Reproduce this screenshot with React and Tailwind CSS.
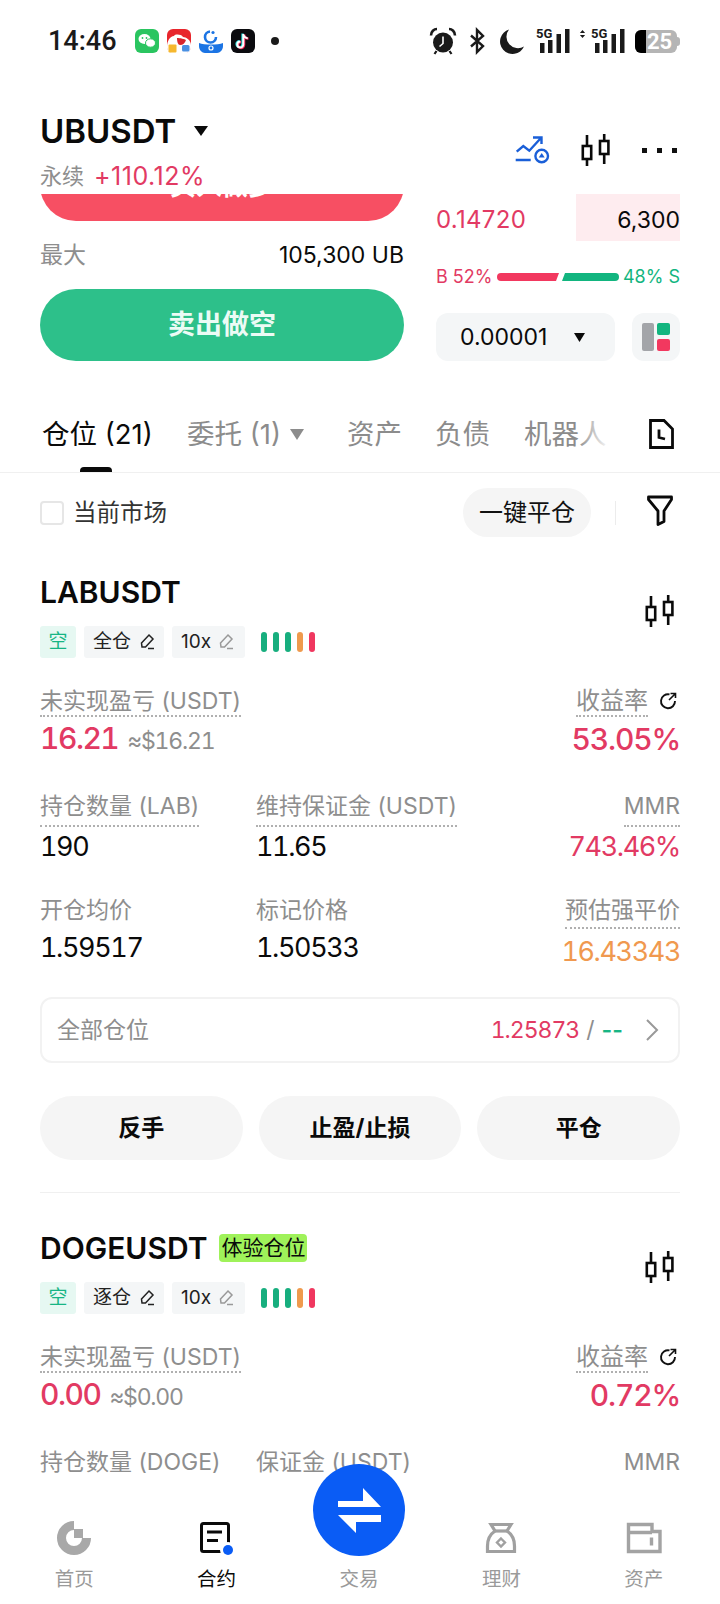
import React from 'react';

function AppIcons() {
  return (
    <div className="flex items-center gap-2 ml-[18px]">
      {/* wechat */}
      <svg width="24" height="24" viewBox="0 0 24 24">
        <rect width="24" height="24" rx="6" fill="#2ac560" />
        <ellipse cx="9.5" cy="10" rx="6" ry="5" fill="#fff" />
        <ellipse cx="15.5" cy="14" rx="5" ry="4.2" fill="#fff" stroke="#2ac560" strokeWidth="1" />
        <circle cx="7.5" cy="9" r="0.9" fill="#2ac560" />
        <circle cx="11.5" cy="9" r="0.9" fill="#2ac560" />
      </svg>
      {/* mascot app */}
      <svg width="24" height="24" viewBox="0 0 24 24">
        <rect width="24" height="24" rx="6" fill="#e8262c" />
        <path d="M0 18C0 12 3 7 7 7c1-2 7-2 9 1 3 0 8 3 8 8v2c0 4-2 6-6 6H6c-4 0-6-2-6-6Z" fill="#fff" />
        <path d="M10 9c3 0 8 1 9 2-1 3-3 5-6 5-2 0-3-3-3-7Z" fill="#d9262c" />
        <rect x="1.5" y="15.5" width="8" height="8" rx="1" fill="#f6b82e" />
        <rect x="15" y="16" width="7.5" height="6.5" rx="1.5" fill="#4a90e2" />
      </svg>
      {/* blue bowl */}
      <svg width="24" height="24" viewBox="0 0 24 24">
        <path d="M11 2.5a5.5 5.5 0 1 0 6 5.5" fill="none" stroke="#1b74e4" strokeWidth="2.6" />
        <circle cx="14" cy="3.5" r="1.6" fill="#1b74e4" />
        <path d="M0 14c5 2 19 2 24 0v3c0 4-3 7-6 7H6c-3 0-6-3-6-7Z" fill="#1b74e4" />
        <circle cx="12" cy="19" r="2" fill="none" stroke="#fff" strokeWidth="1.2" />
      </svg>
      {/* tiktok */}
      <svg width="24" height="24" viewBox="0 0 24 24">
        <rect width="24" height="24" rx="6" fill="#0b0b0f" />
        <path d="M12.3 5v10.5a3 3 0 1 1-3-3M12.3 5c.3 2.4 2 4 4.4 4.2" transform="translate(-0.8 -0.4)" fill="none" stroke="#25e6e6" strokeWidth="2.3" />
        <path d="M12.3 5v10.5a3 3 0 1 1-3-3M12.3 5c.3 2.4 2 4 4.4 4.2" transform="translate(0.8 0.5)" fill="none" stroke="#f5285a" strokeWidth="2.3" />
        <path d="M12.3 5v10.5a3 3 0 1 1-3-3M12.3 5c.3 2.4 2 4 4.4 4.2" fill="none" stroke="#fff" strokeWidth="2" />
      </svg>
      <div className="w-2 h-2 rounded-full bg-[#1a1a1a] ml-2" />
    </div>
  );
}

function Signal({ arrows }) {
  const ox = arrows ? 12 : 0;
  return (
    <svg width={arrows ? 47 : 36} height="30" viewBox={`0 0 ${arrows ? 47 : 36} 30`}>
      {arrows && <path d="M4.5 4l2.6 3H1.9ZM4.5 12l2.6-3H1.9Z" fill="#1a1a1a" />}
      <text x={ox + 1} y="12" fontSize="13" fontWeight="700" fill="#1a1a1a" fontFamily="Roboto, sans-serif">5G</text>
      <rect x={ox + 5} y="17" width="4.5" height="10" fill="#1a1a1a" />
      <rect x={ox + 13} y="14" width="4.5" height="13" fill="#1a1a1a" />
      <rect x={ox + 21.5} y="8" width="4.5" height="19" fill="#1a1a1a" />
      <rect x={ox + 30} y="3" width="4.5" height="24" fill="#1a1a1a" />
    </svg>
  );
}

function StatusBar() {
  return (
    <div className="h-[82px] flex items-center pl-[48px] pr-[40px]">
      <span className="font-['Roboto',sans-serif] font-medium text-[27px] leading-none text-[#1a1a1a]">14:46</span>
      <AppIcons />
      <div className="ml-auto flex items-center">
        <svg width="30" height="30" viewBox="0 0 30 30">
          <circle cx="15" cy="16.5" r="10" fill="#1a1a1a" />
          <path d="M15 10.5v7l-3.5 3" fill="none" stroke="#fff" strokeWidth="1.6" />
          <path d="M3 9.5c0-4 3-6.5 6-6.5M27 9.5c0-4-3-6.5-6-6.5" fill="none" stroke="#1a1a1a" strokeWidth="2.6" />
          <path d="M8.5 25l-2 3M21.5 25l2 3" stroke="#1a1a1a" strokeWidth="2.2" />
        </svg>
        <svg className="ml-[10px]" width="18" height="30" viewBox="0 0 18 30">
          <path d="M3 9.5l12 10.5-6 6V4l6 6L3 20.5" fill="none" stroke="#1a1a1a" strokeWidth="2.4" />
        </svg>
        <svg className="ml-[12px]" width="27" height="27" viewBox="0 0 27 27">
          <path d="M11 1.5A12.5 12.5 0 1 0 26 18.5 11.5 11.5 0 0 1 11 1.5Z" fill="#1a1a1a" />
        </svg>
        <div className="ml-[10px]"><Signal /></div>
        <div className="ml-[7px]"><Signal arrows /></div>
        <div className="ml-[10px] flex items-center">
          <div className="w-[42px] h-[23px] rounded-[6px] overflow-hidden flex bg-[#b5b5b5]">
            <div className="w-[11px] bg-black" />
            <span className="font-['Roboto',sans-serif] font-bold text-[22px] leading-[23px] text-white ml-[1px]">25</span>
          </div>
          <div className="w-[3px] h-[9px] bg-[#b5b5b5] rounded-r-sm" />
        </div>
      </div>
    </div>
  );
}

function CandleIcon({ className }) {
  return (
    <svg className={className} width="32" height="34" viewBox="0 0 32 34" fill="none" stroke="#0a0a0a" strokeWidth="2.6">
      <rect x="2.8" y="13" width="8.4" height="13" />
      <path d="M7 2v11M7 26v7" />
      <rect x="20" y="8" width="8.4" height="13" />
      <path d="M24.2 1v7M24.2 21v10" />
    </svg>
  );
}

function Header() {
  return (
    <div className="h-[112px] flex justify-between px-10">
      <div className="pt-[29px]">
        <div className="flex items-center">
          <span className="font-semibold text-[33px] leading-[40px] text-[#0a0a0a]">UBUSDT</span>
          <svg className="ml-[18px]" width="14" height="10" viewBox="0 0 14 10"><path d="M0 0h14L7 10Z" fill="#0a0a0a" /></svg>
        </div>
        <div className="mt-[10px] flex items-center leading-[30px]">
          <span className="text-[22px] text-[#8e8e8e]">永续</span>
          <span className="ml-[10px] text-[25px] tracking-[0.5px] text-[#e23a63]">+110.12%</span>
        </div>
      </div>
      <div className="pt-[48px] pr-[3px] flex items-center self-start h-[88px]">
        <svg width="36" height="36" viewBox="14 12 36 36" fill="none" stroke="#1a5fd8" strokeWidth="2.4">
          <path d="M16.7 31.7l6.6-5.7 6 4.7 11.4-12.4M33 17.5h8.5V24M15.7 40h15" />
          <circle cx="41.7" cy="36" r="6.3" />
          <path d="M41.7 33l3 4.6h-6Z" fill="#1a5fd8" stroke="none" />
        </svg>
        <CandleIcon className="ml-[30px]" />
        <div className="ml-[30px] flex gap-[10px]">
          <div className="w-[5px] h-[5px] bg-[#111]" />
          <div className="w-[5px] h-[5px] bg-[#111]" />
          <div className="w-[5px] h-[5px] bg-[#111]" />
        </div>
      </div>
    </div>
  );
}

function TradePanel() {
  return (
    <div className="h-[167px] overflow-hidden flex pl-10 pr-10">
      <div className="w-[364px] shrink-0">
        <div className="mt-[-45px] h-[72px] rounded-[36px] bg-[#f74f63] flex items-center justify-center text-white font-bold text-[26px]">买入做多</div>
        <div className="mt-[19px] flex justify-between items-center text-[23px] leading-[30px]">
          <span className="text-[#8e8e8e]">最大</span>
          <span className="text-[#0a0a0a]">105,300 UB</span>
        </div>
        <div className="mt-[19px] h-[72px] rounded-[36px] bg-[#2dc08a] flex items-center justify-center text-[#ecfbf5] font-bold text-[27px]">卖出做空</div>
      </div>
      <div className="ml-[32px] flex-1">
        <div className="h-[47px] flex justify-between text-[23px]">
          <span className="self-center pt-[5px] text-[24px] tracking-[0.3px] text-[#e23a63]">0.14720</span>
          <div className="w-[104px] pt-[5px] bg-[#feecef] flex items-center justify-end text-[#0a0a0a]">6,300</div>
        </div>
        <div className="mt-[26px] h-5 flex items-center text-[18px] leading-5">
          <span className="text-[#e23a63] whitespace-nowrap">B 52%</span>
          <svg className="ml-[5px]" width="62" height="8" viewBox="0 0 62 8"><path d="M4 0H62L59 8H4a4 4 0 0 1 0-8Z" fill="#f2385f" /></svg>
          <svg className="ml-[3px]" width="57" height="8" viewBox="0 0 57 8"><path d="M3 0H53a4 4 0 0 1 0 8H0Z" fill="#12b57f" /></svg>
          <span className="ml-auto text-[#12b57f] whitespace-nowrap">48% S</span>
        </div>
        <div className="mt-[26px] flex justify-between">
          <div className="w-[179px] h-[48px] rounded-xl bg-[#f4f6f7] flex items-center pl-6 text-[23px] text-[#0a0a0a]">
            0.00001
            <svg className="ml-[27px]" width="11" height="9" viewBox="0 0 11 9"><path d="M0 0h11L5.5 9Z" fill="#0a0a0a" /></svg>
          </div>
          <div className="w-[48px] h-[48px] rounded-xl bg-[#f4f6f7] flex items-center justify-center gap-[3px]">
            <div className="w-[12px] h-[28px] rounded-[2px] bg-[#a3a5a9]" />
            <div className="flex flex-col gap-[4px]">
              <div className="w-[13px] h-[12px] rounded-[2px] bg-[#12b57f]" />
              <div className="w-[13px] h-[12px] rounded-[2px] bg-[#f2385f]" />
            </div>
          </div>
        </div>
      </div>
    </div>
  );
}

function Tabs() {
  return (
    <div className="h-[112px] pt-[55px] border-b border-[#f0f0f0] relative flex items-start pl-[42px] text-[27.5px] leading-[36px] text-[#8c8c8c]">
      <div className="relative w-[111px] whitespace-nowrap text-[#0a0a0a]">
        仓位 (21)
        <div className="absolute left-[38px] top-[51px] w-[32px] h-[5px] rounded-t-[4px] bg-[#0a0a0a]" />
      </div>
      <span className="ml-[34px] w-[97px] whitespace-nowrap">委托 (1)</span>
      <svg className="ml-[6px] mt-[13px]" width="14" height="11" viewBox="0 0 14 11"><path d="M0 0h14L7 11Z" fill="#8c8c8c" /></svg>
      <span className="ml-[43px]">资产</span>
      <span className="ml-[33px]">负债</span>
      <div className="ml-[34px] relative">
        机器人
        <div className="absolute right-0 top-0 w-[30px] h-full bg-gradient-to-r from-white/0 to-white/90" />
      </div>
      <svg className="ml-[40px] mt-[1px]" width="29" height="34" viewBox="0 0 29 34" fill="none" stroke="#0a0a0a" strokeWidth="2.8">
        <path d="M3.5 3.5H17L25.5 12V30.5H3.5Z" />
        <path d="M12 12.5v8l6 1.5" />
      </svg>
    </div>
  );
}

function FilterRow() {
  return (
    <div className="pt-[15px] pl-10 pr-[45px] flex items-center">
      <div className="w-[24px] h-[24px] rounded-[4px] border-2 border-[#e6e6e6]" />
      <span className="ml-[9px] pt-[1px] text-[23.5px] text-[#333]">当前市场</span>
      <div className="ml-auto w-[128px] h-[49px] rounded-full bg-[#f5f5f5] flex items-center justify-center text-[24px] text-[#111]">一键平仓</div>
      <div className="ml-[24px] w-px h-[24px] bg-[#ececec]" />
      <svg className="ml-[29px] mt-[-5px]" width="30" height="34" viewBox="0 0 30 34" fill="none" stroke="#0a0a0a" strokeWidth="2.8" strokeLinejoin="round">
        <path d="M3.5 4h23v2.5L19 18v10.5L13 31.5V18L3.5 6.5Z" />
      </svg>
    </div>
  );
}

function PencilIcon({ color }) {
  return (
    <svg width="16" height="18" viewBox="0 0 16 18" fill="none" stroke={color} strokeWidth="1.5">
      <path d="M10 2l4 4-7.5 8H3l-.5-4Z" />
      <path d="M9 15.5h6" />
    </svg>
  );
}

function Tags({ margin }) {
  return (
    <div className="mt-[16px] flex items-center h-[32px]">
      <div className="w-[36px] h-full rounded-[3px] bg-[#e6f8f2] text-[#17b584] text-[19px] flex items-center justify-center">空</div>
      <div className="ml-2 w-[80px] h-full rounded-[3px] bg-[#f4f6f7] text-[19px] text-[#222] flex items-center pl-[9px]">
        {margin}
        <span className="ml-[8px]"><PencilIcon color="#222" /></span>
      </div>
      <div className="ml-2 w-[73px] h-full rounded-[3px] bg-[#f4f6f7] text-[19px] text-[#222] flex items-center pl-[9px]">
        10x
        <span className="ml-[7px]"><PencilIcon color="#999" /></span>
      </div>
      <div className="ml-4 flex gap-[6px]">
        <div className="w-[6px] h-[20px] rounded-full bg-[#17ae7e]" />
        <div className="w-[6px] h-[20px] rounded-full bg-[#17ae7e]" />
        <div className="w-[6px] h-[20px] rounded-full bg-[#17ae7e]" />
        <div className="w-[6px] h-[20px] rounded-full bg-[#ef9a4d]" />
        <div className="w-[6px] h-[20px] rounded-full bg-[#f0375f]" />
      </div>
    </div>
  );
}

function Label({ children, dotted, pad = '' }) {
  return (
    <span className={`text-[23px] leading-[28px] text-[#8e8e8e] whitespace-nowrap ${dotted ? `border-b-2 border-dotted border-[#b0b0b0] ${pad}` : ''}`}>
      {children}
    </span>
  );
}

// figures use tabular digits pulled in tight, the wide "1" is what the reference shows
function Figure({ children, color = 'text-[#0a0a0a]', className = '' }) {
  return <span className={`tabular-nums text-[27px] leading-[32px] tracking-[-1.4px] ${color} ${className}`}>{children}</span>;
}

function PositionHead({ symbol, badge, margin }) {
  return (
    <div className="flex justify-between">
      <div>
        <div className="flex items-center h-[36px]">
          <span className="font-semibold text-[30px] leading-[36px] text-[#0a0a0a]">{symbol}</span>
          {badge && <span className="ml-[12px] h-[28px] w-[88px] rounded-[4px] bg-[#9ff25a] text-[21px] leading-[28px] text-[#0a0a0a] text-center">{badge}</span>}
        </div>
        <Tags margin={margin} />
      </div>
      <CandleIcon className="mt-[20px] mr-[4px]" />
    </div>
  );
}

function PnlRow({ pnl, usd, rate }) {
  return (
    <div className="mt-[29px]">
      <div className="flex justify-between items-start">
        <Label dotted>未实现盈亏 (USDT)</Label>
        <div className="flex items-start pr-[2px]">
          <span className="text-[24px] leading-[28px] text-[#8e8e8e] whitespace-nowrap border-b-2 border-dotted border-[#b0b0b0]">收益率</span>
          <svg className="ml-[10px] mt-[4px]" width="20" height="20" viewBox="0 0 20 20" fill="none" stroke="#111" strokeWidth="1.9">
            <path d="M11.5 3.4A7 7 0 1 0 17 10" />
            <path d="M11 9l6-6M12.5 2.5H17.5V7" strokeWidth="1.6" />
          </svg>
        </div>
      </div>
      <div className="mt-[4px] flex justify-between items-center h-[36px]">
        <div className="flex items-baseline">
          <span className="tabular-nums font-medium text-[30px] leading-[36px] tracking-[-1.5px] text-[#e23a63]">{pnl}</span>
          <span className="tabular-nums ml-[9px] text-[23px] tracking-[-1.2px] text-[#8e8e8e]">{usd}</span>
        </div>
        <span className="tabular-nums font-medium text-[30px] leading-[36px] tracking-[-1.2px] text-[#e23a63]">{rate}</span>
      </div>
    </div>
  );
}

function NavIcon({ name }) {
  if (name === 'home') {
    return (
      <svg width="36" height="36" viewBox="0 0 36 36" fill="none">
        <path d="M18 5.5A12.5 12.5 0 1 0 30.5 18" stroke="#a8a8a8" strokeWidth="9" />
        <rect x="18" y="9" width="9" height="9" fill="#a8a8a8" />
      </svg>
    );
  }
  if (name === 'contract') {
    return (
      <svg width="40" height="40" viewBox="0 0 40 40" fill="none">
        <rect x="4.5" y="5.5" width="27" height="28" rx="2" stroke="#0a0a0a" strokeWidth="3" />
        <path d="M10 14h15M10 22.5h11" stroke="#0a0a0a" strokeWidth="3" />
        <circle cx="31" cy="32" r="8" fill="#fff" />
        <circle cx="31" cy="32" r="5" fill="#0a5cf5" />
      </svg>
    );
  }
  if (name === 'earn') {
    return (
      <svg width="34" height="36" viewBox="0 0 34 36" fill="none" stroke="#a0a0a0" strokeWidth="3.2">
        <path d="M7 4.5h20L23 11C27.5 14 30.5 20 30.5 26v5.5H3.5V26C3.5 20 6.5 14 11 11Z" />
        <path d="M11 11h12" />
        <path d="M17 18.5l4 4-4 4-4-4Z" strokeWidth="2.4" />
      </svg>
    );
  }
  if (name === 'assets') {
    return (
      <svg width="38" height="34" viewBox="0 0 38 34" fill="none" stroke="#a3a3a3" strokeWidth="3.4">
        <path d="M3.5 3.5H27V10.5H35V30.5H3.5Z" />
        <path d="M3.5 11.5H27M26.5 16.5v8" />
      </svg>
    );
  }
  return <div className="w-[36px] h-[36px]" />;
}

function BottomNav() {
  const items = [
    { name: 'home', label: '首页' },
    { name: 'contract', label: '合约', active: true },
    { name: 'trade', label: '交易' },
    { name: 'earn', label: '理财' },
    { name: 'assets', label: '资产' },
  ];
  return (
    <div className="absolute left-0 right-0 bottom-0 h-[128px] bg-white pl-[3px] pr-[5px] pt-[42px] grid grid-cols-5">
      {items.map((it) => (
        <div key={it.name} className="flex flex-col items-center">
          <div className="h-[40px] flex items-center justify-center"><NavIcon name={it.name} /></div>
          <span className={`mt-[8px] text-[19.5px] leading-[26px] ${it.active ? 'text-[#0a0a0a]' : 'text-[#9a9a9a]'}`}>{it.label}</span>
        </div>
      ))}
      {/* centre trade button sits over the nav edge */}
      <div className="absolute left-[313px] top-[-12px] w-[92px] h-[92px] rounded-full bg-[#0a5cf5]">
        <svg width="92" height="92" viewBox="0 0 92 92">
          <path d="M50 24L68 43H25V37H50Z" fill="#fff" />
          <path d="M68 51V58H43V69L25 51Z" fill="#fff" />
        </svg>
      </div>
    </div>
  );
}

export default function App() {
  return (
    <div className="relative w-[720px] h-[1604px] overflow-hidden bg-white font-['Inter','Noto_Sans_CJK_SC',sans-serif]">
      <StatusBar />
      <Header />
      <TradePanel />
      <Tabs />
      <FilterRow />

      <div className="mt-[37px] px-10">
        <PositionHead symbol="LABUSDT" margin="全仓" />
        <PnlRow pnl="16.21" usd="≈$16.21" rate="53.05%" />

        <div className="mt-[35px] grid grid-cols-[216px_1fr_auto]">
          <div className="flex flex-col items-start">
            <Label dotted pad="pb-[5px]">持仓数量 (LAB)</Label>
            <Figure className="mt-[4px]">190</Figure>
          </div>
          <div className="flex flex-col items-start">
            <Label dotted pad="pb-[5px]">维持保证金 (USDT)</Label>
            <Figure className="mt-[4px]">11.65</Figure>
          </div>
          <div className="flex flex-col items-end">
            <Label dotted pad="pb-[5px]">MMR</Label>
            <Figure className="mt-[4px]" color="text-[#e23a63]">743.46%</Figure>
          </div>
        </div>

        <div className="mt-[33px] grid grid-cols-[216px_1fr_auto]">
          <div className="flex flex-col items-start">
            <Label>开仓均价</Label>
            <Figure className="mt-[8px]">1.59517</Figure>
          </div>
          <div className="flex flex-col items-start">
            <Label>标记价格</Label>
            <Figure className="mt-[8px]">1.50533</Figure>
          </div>
          <div className="flex flex-col items-end">
            <Label dotted pad="pb-[3px]">预估强平价</Label>
            <Figure className="mt-[7px]" color="text-[#f0994f]">16.43343</Figure>
          </div>
        </div>

        <div className="mt-[29px] h-[66px] rounded-xl border-2 border-[#f2f2f2] flex items-center pl-[15px] pr-[19px]">
          <span className="text-[23px] text-[#8e8e8e]">全部仓位</span>
          <span className="tabular-nums ml-auto text-[23px] tracking-[-1px] text-[#e23a63]">1.25873</span>
          <span className="ml-[7px] text-[23px] text-[#8e8e8e]">/</span>
          <span className="ml-[7px] text-[23px] font-semibold text-[#17b584]">--</span>
          <svg className="ml-[22px]" width="14" height="24" viewBox="0 0 14 24" fill="none" stroke="#999" strokeWidth="2"><path d="M2 2l10 10L2 22" /></svg>
        </div>

        <div className="mt-[33px] grid grid-cols-3 gap-4">
          <div className="h-[64px] rounded-full bg-[#f5f5f5] flex items-center justify-center font-bold text-[23px] text-[#0a0a0a]">反手</div>
          <div className="h-[64px] rounded-full bg-[#f5f5f5] flex items-center justify-center font-bold text-[23px] text-[#0a0a0a]">止盈/止损</div>
          <div className="h-[64px] rounded-full bg-[#f5f5f5] flex items-center justify-center font-bold text-[23px] text-[#0a0a0a]">平仓</div>
        </div>

        <div className="mt-[32px] h-px bg-[#f0f0f0]" />

        <div className="mt-[37px]">
          <PositionHead symbol="DOGEUSDT" badge="体验仓位" margin="逐仓" />
          <PnlRow pnl="0.00" usd="≈$0.00" rate="0.72%" />
          <div className="mt-[35px] grid grid-cols-[216px_1fr_auto]">
            <Label>持仓数量 (DOGE)</Label>
            <Label>保证金 (USDT)</Label>
            <Label>MMR</Label>
          </div>
        </div>
      </div>

      <BottomNav />
    </div>
  );
}
